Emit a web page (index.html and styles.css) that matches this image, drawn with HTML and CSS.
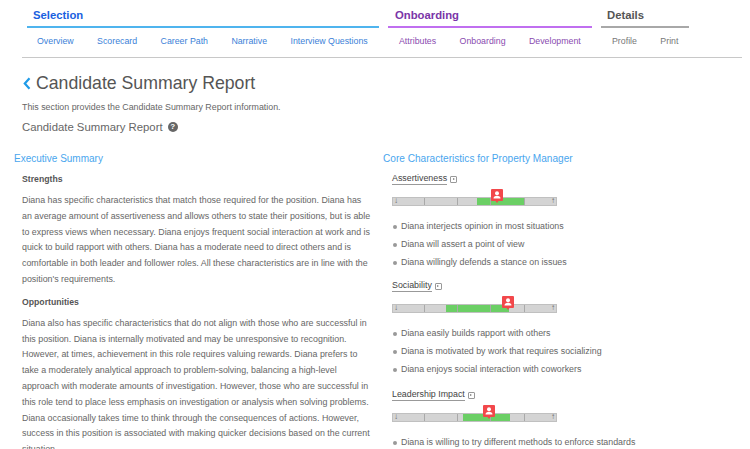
FILE: index.html
```html
<!DOCTYPE html>
<html lang="en">
<head>
<meta charset="utf-8">
<title>Candidate Summary Report</title>
<link rel="stylesheet" href="styles.css">
</head>
<body>
<div class="page">
  <nav class="nav">
    <div class="group group-blue">
      <div class="group-title">Selection</div>
      <div class="links">
        <a>Overview</a><a>Scorecard</a><a>Career Path</a><a>Narrative</a><a>Interview Questions</a>
      </div>
    </div>
    <div class="group group-purple">
      <div class="group-title">Onboarding</div>
      <div class="links">
        <a>Attributes</a><a>Onboarding</a><a>Development</a>
      </div>
    </div>
    <div class="group group-gray">
      <div class="group-title">Details</div>
      <div class="links">
        <a>Profile</a><a>Print</a>
      </div>
    </div>
  </nav>

  <header class="head">
    <h1 class="title"><svg class="back" width="8" height="13" viewBox="0 0 8 13"><path d="M6.500 1.200 1.800 6.500l4.700 5.300" fill="none" stroke="#1f9be8" stroke-width="2.200"/></svg>Candidate Summary Report</h1>
    <p class="intro">This section provides the Candidate Summary Report information.</p>
    <h2 class="subtitle">Candidate Summary Report <span class="help">?</span></h2>
  </header>

  <div class="columns">
    <section class="summary">
      <h3 class="section-title">Executive Summary</h3>
      <div class="summary-body">
        <h4 class="label">Strengths</h4>
        <p class="para">Diana has specific characteristics that match those required for the position. Diana has<br>an average amount of assertiveness and allows others to state their positions, but is able<br>to express views when necessary. Diana enjoys frequent social interaction at work and is<br>quick to build rapport with others. Diana has a moderate need to direct others and is<br>comfortable in both leader and follower roles. All these characteristics are in line with the<br>position's requirements.</p>
        <h4 class="label">Opportunities</h4>
        <p class="para">Diana also has specific characteristics that do not align with those who are successful in<br>this position. Diana is internally motivated and may be unresponsive to recognition.<br>However, at times, achievement in this role requires valuing rewards. Diana prefers to<br>take a moderately analytical approach to problem-solving, balancing a high-level<br>approach with moderate amounts of investigation. However, those who are successful in<br>this role tend to place less emphasis on investigation or analysis when solving problems.<br>Diana occasionally takes time to think through the consequences of actions. However,<br>success in this position is associated with making quicker decisions based on the current<br>situation.</p>
      </div>
    </section>

    <section class="core">
      <h3 class="section-title core-title">Core Characteristics for Property Manager</h3>

      <div class="trait">
        <div class="trait-head"><span class="trait-name">Assertiveness</span><span class="expand"></span></div>
        <div class="gauge">
          <span class="fill" style="left:84px;width:48px"></span>
          <span class="tick" style="left:31px"></span><span class="tick" style="left:64px"></span><span class="tick" style="left:97px"></span><span class="tick" style="left:131px"></span>
          <span class="end end-low">↓</span><span class="end end-high">↑</span>
          <span class="pin" style="left:98px"><svg width="12" height="14" viewBox="0 0 12 14"><path d="M1 0h10a1 1 0 0 1 1 1v10a1 1 0 0 1-1 1H7.500L6 14l-1.500-2H1a1 1 0 0 1-1-1V1a1 1 0 0 1 1-1z" fill="#f2484b"/><circle cx="6" cy="4.300" r="2" fill="#fff"/><path d="M2.500 9.500c0-1.800 1.500-2.700 3.500-2.700s3.500.9 3.500 2.700z" fill="#fff"/></svg></span>
        </div>
        <ul class="points">
          <li>Diana interjects opinion in most situations</li>
          <li>Diana will assert a point of view</li>
          <li>Diana willingly defends a stance on issues</li>
        </ul>
      </div>

      <div class="trait trait-roomy">
        <div class="trait-head"><span class="trait-name">Sociability</span><span class="expand"></span></div>
        <div class="gauge">
          <span class="fill" style="left:53px;width:63px"></span>
          <span class="tick" style="left:31px"></span><span class="tick" style="left:64px"></span><span class="tick" style="left:97px"></span><span class="tick" style="left:131px"></span>
          <span class="end end-low">↓</span><span class="end end-high">↑</span>
          <span class="pin" style="left:109px"><svg width="12" height="14" viewBox="0 0 12 14"><path d="M1 0h10a1 1 0 0 1 1 1v10a1 1 0 0 1-1 1H7.500L6 14l-1.500-2H1a1 1 0 0 1-1-1V1a1 1 0 0 1 1-1z" fill="#f2484b"/><circle cx="6" cy="4.300" r="2" fill="#fff"/><path d="M2.500 9.500c0-1.800 1.500-2.700 3.500-2.700s3.500.9 3.500 2.700z" fill="#fff"/></svg></span>
        </div>
        <ul class="points">
          <li>Diana easily builds rapport with others</li>
          <li>Diana is motivated by work that requires socializing</li>
          <li>Diana enjoys social interaction with coworkers</li>
        </ul>
      </div>

      <div class="trait">
        <div class="trait-head"><span class="trait-name">Leadership Impact</span><span class="expand"></span></div>
        <div class="gauge">
          <span class="fill" style="left:70px;width:47px"></span>
          <span class="tick" style="left:31px"></span><span class="tick" style="left:64px"></span><span class="tick" style="left:97px"></span><span class="tick" style="left:131px"></span>
          <span class="end end-low">↓</span><span class="end end-high">↑</span>
          <span class="pin" style="left:90px"><svg width="12" height="14" viewBox="0 0 12 14"><path d="M1 0h10a1 1 0 0 1 1 1v10a1 1 0 0 1-1 1H7.500L6 14l-1.500-2H1a1 1 0 0 1-1-1V1a1 1 0 0 1 1-1z" fill="#f2484b"/><circle cx="6" cy="4.300" r="2" fill="#fff"/><path d="M2.500 9.500c0-1.800 1.500-2.700 3.500-2.700s3.500.9 3.500 2.700z" fill="#fff"/></svg></span>
        </div>
        <ul class="points">
          <li>Diana is willing to try different methods to enforce standards</li>
        </ul>
      </div>
    </section>
  </div>
</div>
</body>
</html>
```
FILE: styles.css
```css
* { box-sizing: border-box; }
html, body { margin: 0; padding: 0; height: 449px; overflow: hidden; background: #fff; }
body { font-family: "Liberation Sans", Arial, sans-serif; color: #555; }
.page { width: 750px; height: 449px; overflow: hidden; }

.nav { display: flex; gap: 9px; margin: 0 8px 0 22px; padding: 0 0 0 5px; height: 58px; border-bottom: 1px solid #c8c8c8; }
.group { flex: none; }
.group-title { height: 28px; border-bottom: 2px solid; padding: 8px 0 0 6px; font-size: 11.300px; line-height: 14px; font-weight: bold; }
.links { display: flex; gap: 23.400px; padding-top: 7px; font-size: 8.800px; line-height: 12px; white-space: nowrap; }
.group-blue { width: 352px; }
.group-blue .group-title { color: #1a5fe0; border-color: #4fb4ee; }
.group-blue a { color: #3b7fd8; }
.group-blue .links { padding-left: 10px; }
.group-purple { width: 204px; }
.group-purple .group-title { color: #7a35a8; border-color: #c06ff0; padding-left: 7px; }
.group-purple a { color: #8a4cb0; }
.group-purple .links { padding-left: 11px; }
.group-gray { width: 88px; }
.group-gray .group-title { color: #555; border-color: #a8a8a8; }
.group-gray a { color: #777; }
.group-gray .links { padding-left: 11px; }

.head { padding: 14px 0 0 22px; }
.title { margin: 0; font-size: 17.700px; line-height: 22px; font-weight: normal; color: #555; display: flex; align-items: center; gap: 5px; }
.back { margin-left: 1px; }
.intro { margin: 8px 0 0; font-size: 8.850px; line-height: 11px; color: #666; }
.subtitle { margin: 7px 0 0; font-size: 11.350px; line-height: 14px; font-weight: normal; color: #666; display: flex; align-items: center; gap: 5px; }
.help { display: inline-block; width: 10px; height: 10px; border-radius: 50%; background: #666; color: #fff; font-size: 8px; line-height: 10px; text-align: center; font-weight: bold; }

.columns { display: flex; padding-top: 18px; }
.section-title { margin: 0; font-size: 10px; line-height: 13px; font-weight: normal; color: #4aa6ee; }
.core-title { font-size: 10.100px; }
.summary { flex: none; width: 383px; padding-left: 14px; }
.summary-body { padding: 2px 0 0 8px; }
.label { margin: 6px 0 8px; font-size: 8.700px; line-height: 12px; font-weight: bold; color: #555; }
.para { margin: 0 0 8px; font-size: 8.870px; line-height: 15.800px; color: #666; white-space: nowrap; }

.core { flex: none; width: 367px; }
.trait { padding-left: 9px; margin-bottom: 8px; }
.trait-roomy { margin-bottom: 10px; }
.trait-head { display: flex; align-items: center; gap: 3px; margin-top: 7px; height: 14px; }
.trait-name { font-size: 8.850px; line-height: 11px; color: #444; border-bottom: 1px solid #999; }
.expand { position: relative; width: 7px; height: 7px; border: 1px solid #999; border-radius: 1px; }
.expand::after { content: ""; position: absolute; left: 1.500px; top: 1px; border-left: 2px solid #777; border-top: 1.500px solid transparent; border-bottom: 1.500px solid transparent; }
.gauge { position: relative; width: 165px; height: 9px; margin-top: 11px; background: #d4d4d4; border: 1px solid #c0c0c0; }
.fill { position: absolute; top: 0; bottom: 0; background: #6bcf65; }
.tick { position: absolute; top: 0; bottom: 0; width: 1px; background: #a9a9a9; }
.end { position: absolute; top: -2px; font-size: 8px; line-height: 10px; font-weight: bold; color: #666; }
.end-low { left: 1px; }
.end-high { right: 1px; }
.pin { position: absolute; top: -9px; line-height: 0; }
.points { list-style: none; margin: 11px 0 0; padding: 0; }
.points li { position: relative; padding-left: 9px; font-size: 8.850px; line-height: 18px; color: #666; white-space: nowrap; }
.points li::before { content: ""; position: absolute; left: 1px; top: 8px; width: 4px; height: 4px; border-radius: 50%; background: #999; }
```
